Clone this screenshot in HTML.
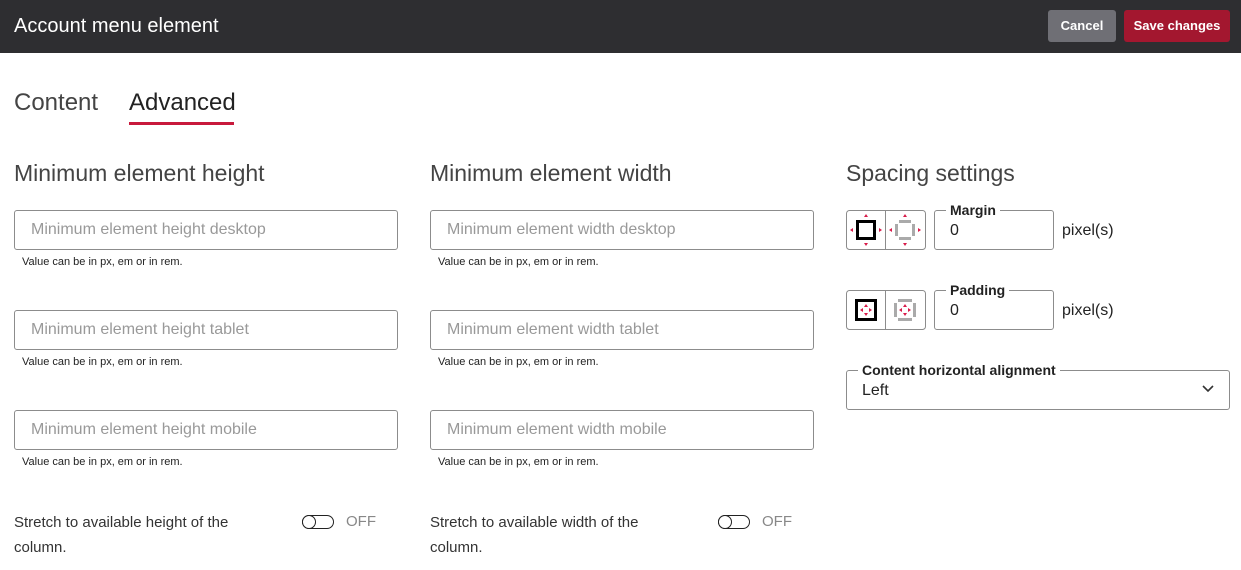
<!DOCTYPE html><html><head><style>
*{box-sizing:border-box;margin:0;padding:0}
body{width:1241px;height:570px;background:#fff;font-family:"Liberation Sans",sans-serif;color:#222;position:relative;overflow:hidden}
.a{position:absolute}
.hdr{left:0;top:0;width:1241px;height:53px;background:#2e2e31}
.t{font-size:20px;color:#fff;left:14px;top:15px}
.btn{top:10px;height:32px;border-radius:3px;color:#fff;font-size:13px;font-weight:bold;text-align:center;line-height:32px}
.tab{font-size:24px;top:89px;color:#444}
.h{font-size:23px;top:160px;color:#444}
.in{height:40px;border:1px solid #8c8c8c;border-radius:3px;font-size:16px;color:#999;padding-left:16px;line-height:38px}
.hl{font-size:11px;color:#222}
.lab{font-size:15px;color:#333;line-height:25px}
.tog{width:32px;height:14px;border:1.5px solid #222;border-radius:8px}
.tog::before{content:"";position:absolute;left:-1px;top:-1.5px;width:14px;height:14px;border:1.5px solid #222;border-radius:50%;background:#fff;box-sizing:border-box}
.off{font-size:15px;color:#888}
.fs{border:1px solid #8c8c8c;border-radius:3px}
.lg{font-size:14px;font-weight:bold;background:#fff;padding:0 4px;color:#222}
.px{font-size:16px;color:#222}
</style></head><body>
<div class="a hdr"></div>
<div class="a t">Account menu element</div>
<div class="a btn" style="left:1048px;width:68px;background:#6f6f75">Cancel</div>
<div class="a btn" style="left:1124px;width:106px;background:#a3172f">Save changes</div>
<div class="a tab" style="left:14px">Content</div>
<div class="a tab" style="left:129px;color:#222">Advanced</div>
<div class="a" style="left:129px;top:122px;width:105px;height:3px;background:#c8193c"></div>

<div class="a h" style="left:14px">Minimum element height</div>
<div class="a h" style="left:430px">Minimum element width</div>
<div class="a h" style="left:846px">Spacing settings</div>

<div class="a in" style="left:14px;top:210px;width:384px">Minimum element height desktop</div>
<div class="a hl" style="left:22px;top:256px">Value can be in px, em or in rem.</div>
<div class="a in" style="left:14px;top:310px;width:384px">Minimum element height tablet</div>
<div class="a hl" style="left:22px;top:356px">Value can be in px, em or in rem.</div>
<div class="a in" style="left:14px;top:410px;width:384px">Minimum element height mobile</div>
<div class="a hl" style="left:22px;top:456px">Value can be in px, em or in rem.</div>
<div class="a lab" style="left:14px;top:510px;width:260px">Stretch to available height of the column.</div>
<div class="a tog" style="left:302px;top:515px"></div>
<div class="a off" style="left:346px;top:513px">OFF</div>

<div class="a in" style="left:430px;top:210px;width:384px">Minimum element width desktop</div>
<div class="a hl" style="left:438px;top:256px">Value can be in px, em or in rem.</div>
<div class="a in" style="left:430px;top:310px;width:384px">Minimum element width tablet</div>
<div class="a hl" style="left:438px;top:356px">Value can be in px, em or in rem.</div>
<div class="a in" style="left:430px;top:410px;width:384px">Minimum element width mobile</div>
<div class="a hl" style="left:438px;top:456px">Value can be in px, em or in rem.</div>
<div class="a lab" style="left:430px;top:510px;width:260px">Stretch to available width of the column.</div>
<div class="a tog" style="left:718px;top:515px"></div>
<div class="a off" style="left:762px;top:513px">OFF</div>

<svg class="a" style="left:846px;top:210px" width="80" height="40" viewBox="0 0 80 40">
<rect x=".5" y=".5" width="79" height="39" rx="3" fill="#fff" stroke="#8c8c8c"/>
<line x1="39.5" y1="0" x2="39.5" y2="40" stroke="#8c8c8c"/>
<rect x="11.5" y="11.5" width="17" height="17" fill="none" stroke="#000" stroke-width="3"/>
<g fill="#d81b4a"><path d="M20 4l-2 3h4z M20 36l-2-3h4z M4 20l3-2v4z M36 20l-3-2v4z"/>
<path d="M59 4l-2 3h4z M59 36l-2-3h4z M43 20l3-2v4z M75 20l-3-2v4z"/></g>
<g stroke="#aaa" stroke-width="3"><line x1="53" y1="11.5" x2="65" y2="11.5"/><line x1="53" y1="28.5" x2="65" y2="28.5"/><line x1="50.5" y1="14" x2="50.5" y2="26"/><line x1="67.5" y1="14" x2="67.5" y2="26"/></g>
</svg>
<div class="a fs" style="left:934px;top:210px;width:120px;height:40px"></div>
<div class="a lg" style="left:946px;top:202px">Margin</div>
<div class="a px" style="left:950px;top:222px">0</div>
<div class="a px" style="left:1062px;top:222px">pixel(s)</div>

<svg class="a" style="left:846px;top:290px" width="80" height="40" viewBox="0 0 80 40">
<rect x=".5" y=".5" width="79" height="39" rx="3" fill="#fff" stroke="#8c8c8c"/>
<line x1="39.5" y1="0" x2="39.5" y2="40" stroke="#8c8c8c"/>
<rect x="10.5" y="10.5" width="19" height="19" fill="none" stroke="#000" stroke-width="3"/>
<g fill="#d81b4a"><path d="M20 14l-2 3h4z M20 26l-2-3h4z M14 20l3-2v4z M26 20l-3-2v4z"/>
<path d="M59 14l-2 3h4z M59 26l-2-3h4z M53 20l3-2v4z M65 20l-3-2v4z"/></g>
<g stroke="#aaa" stroke-width="3"><line x1="52" y1="10.5" x2="66" y2="10.5"/><line x1="52" y1="29.5" x2="66" y2="29.5"/><line x1="49.5" y1="13" x2="49.5" y2="27"/><line x1="68.5" y1="13" x2="68.5" y2="27"/></g>
</svg>
<div class="a fs" style="left:934px;top:290px;width:120px;height:40px"></div>
<div class="a lg" style="left:946px;top:282px">Padding</div>
<div class="a px" style="left:950px;top:302px">0</div>
<div class="a px" style="left:1062px;top:302px">pixel(s)</div>

<div class="a fs" style="left:846px;top:370px;width:384px;height:40px"></div>
<div class="a lg" style="left:858px;top:362px">Content horizontal alignment</div>
<div class="a px" style="left:862px;top:382px">Left</div>
<svg class="a" style="left:1201px;top:384px" width="14" height="10" viewBox="0 0 14 10"><path d="M2 2l5 5 5-5" fill="none" stroke="#333" stroke-width="1.6"/></svg>
</body></html>
